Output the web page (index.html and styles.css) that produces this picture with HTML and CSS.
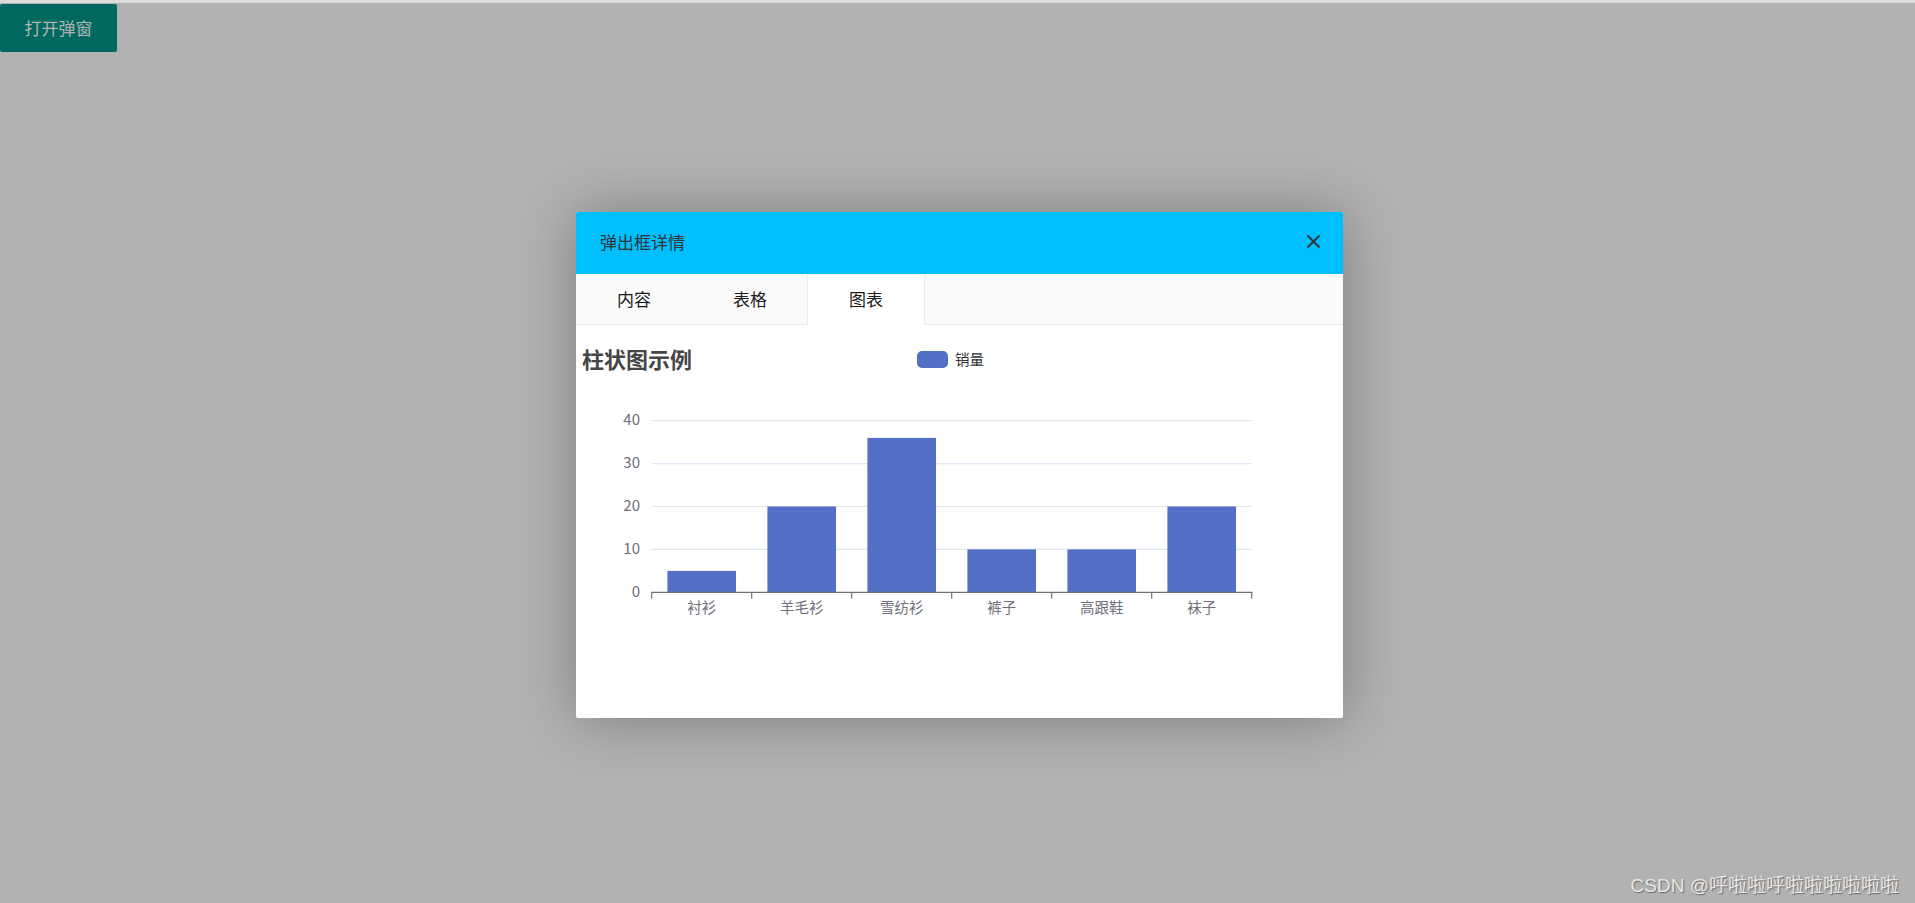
FILE: index.html
```html
<!DOCTYPE html>
<html lang="zh-CN">
<head>
<meta charset="utf-8">
<title>弹窗</title>
<link rel="stylesheet" href="styles.css">
</head>
<body>
<div class="page">
  <button class="open-btn">打开弹窗</button>
</div>

<div class="dialog">
  <div class="dialog-header">
    <span class="dialog-title">弹出框详情</span>
    <svg class="close-icon" width="15" height="15" viewBox="0 0 15 15">
      <path d="M1.5 1.5 L13.5 13.5 M13.5 1.5 L1.5 13.5" stroke="#333" stroke-width="1.8" fill="none"/>
    </svg>
  </div>
  <div class="tabs">
    <div class="tab">内容</div>
    <div class="tab">表格</div>
    <div class="tab active">图表</div>
  </div>
  <div class="tab-body">
    <svg class="chart" width="767" height="393" viewBox="0 0 767 393">
      <text class="chart-title" x="6" y="43">柱状图示例</text>
      <rect x="341" y="26" width="31" height="17" rx="5" fill="#5470c6"/>
      <text class="legend-text" x="379" y="33">销量</text>

      <g stroke="#e0e6f1" stroke-width="1.2">
        <line x1="75.7" y1="95.7" x2="675.7" y2="95.7"/>
        <line x1="75.7" y1="138.6" x2="675.7" y2="138.6"/>
        <line x1="75.7" y1="181.5" x2="675.7" y2="181.5"/>
        <line x1="75.7" y1="224.4" x2="675.7" y2="224.4"/>
      </g>

      <g class="y-labels">
        <text x="64" y="93.7">40</text>
        <text x="64" y="136.6">30</text>
        <text x="64" y="179.5">20</text>
        <text x="64" y="222.4">10</text>
        <text x="64" y="265.3">0</text>
      </g>

      <g fill="#5470c6">
        <rect x="91.4" y="245.9" width="68.6" height="21.4"/>
        <rect x="191.4" y="181.5" width="68.6" height="85.8"/>
        <rect x="291.4" y="112.9" width="68.6" height="154.4"/>
        <rect x="391.4" y="224.4" width="68.6" height="42.9"/>
        <rect x="491.4" y="224.4" width="68.6" height="42.9"/>
        <rect x="591.4" y="181.5" width="68.6" height="85.8"/>
      </g>

      <g stroke="#6e7079" stroke-width="1.2">
        <line x1="75.1" y1="267.3" x2="676.3" y2="267.3"/>
        <line x1="75.7" y1="267.3" x2="75.7" y2="273.4"/>
        <line x1="175.7" y1="267.3" x2="175.7" y2="273.4"/>
        <line x1="275.7" y1="267.3" x2="275.7" y2="273.4"/>
        <line x1="375.7" y1="267.3" x2="375.7" y2="273.4"/>
        <line x1="475.7" y1="267.3" x2="475.7" y2="273.4"/>
        <line x1="575.7" y1="267.3" x2="575.7" y2="273.4"/>
        <line x1="675.7" y1="267.3" x2="675.7" y2="273.4"/>
      </g>

      <g class="x-labels">
        <text x="125.7" y="281.8">衬衫</text>
        <text x="225.7" y="281.8">羊毛衫</text>
        <text x="325.7" y="281.8">雪纺衫</text>
        <text x="425.7" y="281.8">裤子</text>
        <text x="525.7" y="281.8">高跟鞋</text>
        <text x="625.7" y="281.8">袜子</text>
      </g>
    </svg>
  </div>
</div>

<div class="watermark">CSDN @呼啦啦呼啦啦啦啦啦啦</div>
</body>
</html>
```

FILE: styles.css
```css
html, body {
  margin: 0;
  padding: 0;
}

body {
  width: 1915px;
  height: 903px;
  overflow: hidden;
  background: #b2b2b2;
  border-top: 3px solid #dcdcdc;
  box-sizing: border-box;
  font-family: "Noto Sans CJK SC", "Liberation Sans", sans-serif;
  position: relative;
}

.page {
  padding: 1px 0 0 0;
}

.open-btn {
  display: block;
  width: 117px;
  height: 48px;
  border: none;
  border-radius: 2px;
  background: #00695f;
  color: #b3b3b3;
  font-family: "Noto Sans CJK SC", sans-serif;
  font-size: 17px;
  padding: 0 0 2px 0;
  margin: 0;
}

.dialog {
  position: absolute;
  left: 576px;
  top: 209px;
  width: 767px;
  height: 506px;
  background: #fff;
  border-radius: 2px;
  box-shadow: 1px 1px 60px rgba(0, 0, 0, 0.3);
  display: flex;
  flex-direction: column;
  overflow: hidden;
}

.dialog-header {
  height: 62px;
  flex: none;
  background: #00bfff;
  display: flex;
  align-items: center;
  justify-content: space-between;
  padding: 0 22px 0 24px;
  box-sizing: border-box;
}

.dialog-title {
  font-size: 17px;
  color: #333;
  margin-bottom: 4px;
}

.close-icon {
  display: block;
  margin-bottom: 4px;
}

.tabs {
  height: 51px;
  flex: none;
  display: flex;
  background: #fafafa;
  border-bottom: 1px solid #ececec;
  box-sizing: border-box;
}

.tab {
  width: 116px;
  height: 50px;
  display: flex;
  align-items: center;
  justify-content: center;
  font-size: 17px;
  color: #1a1a1a;
  box-sizing: border-box;
  padding-bottom: 2px;
}

.tab.active {
  width: 118px;
  margin-left: -1px;
  height: 51px;
  background: #fff;
  border-left: 1px solid #ececec;
  border-right: 1px solid #ececec;
  border-top: 1px solid #f5f5f5;
  padding-bottom: 3px;
}

.tab-body {
  flex: 1;
}

.chart {
  display: block;
}

.chart-title {
  font-family: "Noto Sans CJK SC", sans-serif;
  font-size: 22px;
  font-weight: bold;
  fill: #464646;
}

.legend-text {
  font-family: "Noto Sans CJK SC", sans-serif;
  font-size: 14.5px;
  fill: #333;
  dominant-baseline: central;
}

.y-labels text {
  font-family: "Noto Sans CJK SC", sans-serif;
  font-size: 15px;
  fill: #6e7079;
  text-anchor: end;
  dominant-baseline: central;
}

.x-labels text {
  font-family: "Noto Sans CJK SC", sans-serif;
  font-size: 14.5px;
  fill: #6e7079;
  text-anchor: middle;
  dominant-baseline: central;
}

.watermark {
  position: absolute;
  right: 16px;
  bottom: 6px;
  font-family: "Liberation Sans", "Noto Sans CJK SC", sans-serif;
  font-size: 19px;
  color: #e8e8e8;
  text-shadow: 1px 1px 1px #6a6a6a;
  white-space: nowrap;
}
```
